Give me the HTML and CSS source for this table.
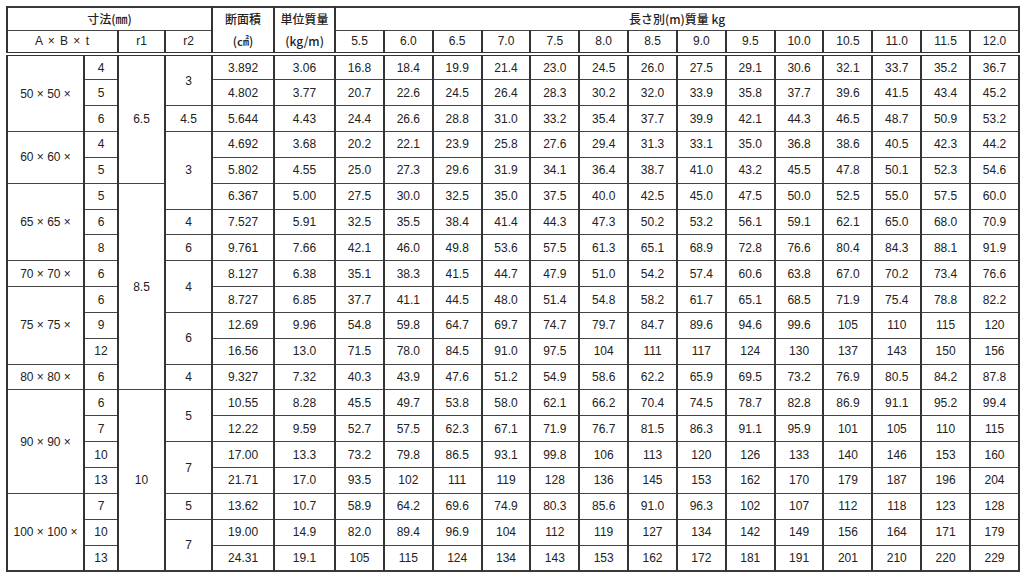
FILE: index.html
```html
<!DOCTYPE html>
<html lang="ja">
<head>
<meta charset="utf-8">
<title>等辺山形鋼 寸法・質量表</title>
<link rel="stylesheet" href="styles.css">
</head>
<body>
<div class="page">
<table class="tbl">
<colgroup>
<col class="c-size"><col class="c-t"><col class="c-r"><col class="c-r"><col class="c-area"><col class="c-mass">
<col><col><col><col><col><col><col><col><col><col><col><col><col><col>
</colgroup>
<thead>
<tr class="h1">
<th colspan="4" class="jp">寸法(㎜)</th>
<th rowspan="2" class="jp two">断面積<br>(㎠)</th>
<th rowspan="2" class="jp two">単位質量<br>(kg/m)</th>
<th colspan="14" class="jp">長さ別(m)質量 kg</th>
</tr>
<tr class="h2">
<th colspan="2" class="abt">A × B × t</th>
<th>r1</th><th>r2</th>
<th>5.5</th><th>6.0</th><th>6.5</th><th>7.0</th><th>7.5</th><th>8.0</th><th>8.5</th><th>9.0</th><th>9.5</th><th>10.0</th><th>10.5</th><th>11.0</th><th>11.5</th><th>12.0</th>
</tr>
</thead>
<tbody>
<tr><td rowspan="3">50 × 50 ×</td><td>4</td><td rowspan="5">6.5</td><td rowspan="2">3</td><td>3.892</td><td>3.06</td><td>16.8</td><td>18.4</td><td>19.9</td><td>21.4</td><td>23.0</td><td>24.5</td><td>26.0</td><td>27.5</td><td>29.1</td><td>30.6</td><td>32.1</td><td>33.7</td><td>35.2</td><td>36.7</td></tr>
<tr><td>5</td><td>4.802</td><td>3.77</td><td>20.7</td><td>22.6</td><td>24.5</td><td>26.4</td><td>28.3</td><td>30.2</td><td>32.0</td><td>33.9</td><td>35.8</td><td>37.7</td><td>39.6</td><td>41.5</td><td>43.4</td><td>45.2</td></tr>
<tr><td>6</td><td>4.5</td><td>5.644</td><td>4.43</td><td>24.4</td><td>26.6</td><td>28.8</td><td>31.0</td><td>33.2</td><td>35.4</td><td>37.7</td><td>39.9</td><td>42.1</td><td>44.3</td><td>46.5</td><td>48.7</td><td>50.9</td><td>53.2</td></tr>
<tr><td rowspan="2">60 × 60 ×</td><td>4</td><td rowspan="3">3</td><td>4.692</td><td>3.68</td><td>20.2</td><td>22.1</td><td>23.9</td><td>25.8</td><td>27.6</td><td>29.4</td><td>31.3</td><td>33.1</td><td>35.0</td><td>36.8</td><td>38.6</td><td>40.5</td><td>42.3</td><td>44.2</td></tr>
<tr><td>5</td><td>5.802</td><td>4.55</td><td>25.0</td><td>27.3</td><td>29.6</td><td>31.9</td><td>34.1</td><td>36.4</td><td>38.7</td><td>41.0</td><td>43.2</td><td>45.5</td><td>47.8</td><td>50.1</td><td>52.3</td><td>54.6</td></tr>
<tr><td rowspan="3">65 × 65 ×</td><td>5</td><td rowspan="8">8.5</td><td>6.367</td><td>5.00</td><td>27.5</td><td>30.0</td><td>32.5</td><td>35.0</td><td>37.5</td><td>40.0</td><td>42.5</td><td>45.0</td><td>47.5</td><td>50.0</td><td>52.5</td><td>55.0</td><td>57.5</td><td>60.0</td></tr>
<tr><td>6</td><td>4</td><td>7.527</td><td>5.91</td><td>32.5</td><td>35.5</td><td>38.4</td><td>41.4</td><td>44.3</td><td>47.3</td><td>50.2</td><td>53.2</td><td>56.1</td><td>59.1</td><td>62.1</td><td>65.0</td><td>68.0</td><td>70.9</td></tr>
<tr><td>8</td><td>6</td><td>9.761</td><td>7.66</td><td>42.1</td><td>46.0</td><td>49.8</td><td>53.6</td><td>57.5</td><td>61.3</td><td>65.1</td><td>68.9</td><td>72.8</td><td>76.6</td><td>80.4</td><td>84.3</td><td>88.1</td><td>91.9</td></tr>
<tr><td>70 × 70 ×</td><td>6</td><td rowspan="2">4</td><td>8.127</td><td>6.38</td><td>35.1</td><td>38.3</td><td>41.5</td><td>44.7</td><td>47.9</td><td>51.0</td><td>54.2</td><td>57.4</td><td>60.6</td><td>63.8</td><td>67.0</td><td>70.2</td><td>73.4</td><td>76.6</td></tr>
<tr><td rowspan="3">75 × 75 ×</td><td>6</td><td>8.727</td><td>6.85</td><td>37.7</td><td>41.1</td><td>44.5</td><td>48.0</td><td>51.4</td><td>54.8</td><td>58.2</td><td>61.7</td><td>65.1</td><td>68.5</td><td>71.9</td><td>75.4</td><td>78.8</td><td>82.2</td></tr>
<tr><td>9</td><td rowspan="2">6</td><td>12.69</td><td>9.96</td><td>54.8</td><td>59.8</td><td>64.7</td><td>69.7</td><td>74.7</td><td>79.7</td><td>84.7</td><td>89.6</td><td>94.6</td><td>99.6</td><td>105</td><td>110</td><td>115</td><td>120</td></tr>
<tr><td>12</td><td>16.56</td><td>13.0</td><td>71.5</td><td>78.0</td><td>84.5</td><td>91.0</td><td>97.5</td><td>104</td><td>111</td><td>117</td><td>124</td><td>130</td><td>137</td><td>143</td><td>150</td><td>156</td></tr>
<tr><td>80 × 80 ×</td><td>6</td><td>4</td><td>9.327</td><td>7.32</td><td>40.3</td><td>43.9</td><td>47.6</td><td>51.2</td><td>54.9</td><td>58.6</td><td>62.2</td><td>65.9</td><td>69.5</td><td>73.2</td><td>76.9</td><td>80.5</td><td>84.2</td><td>87.8</td></tr>
<tr><td rowspan="4">90 × 90 ×</td><td>6</td><td rowspan="7">10</td><td rowspan="2">5</td><td>10.55</td><td>8.28</td><td>45.5</td><td>49.7</td><td>53.8</td><td>58.0</td><td>62.1</td><td>66.2</td><td>70.4</td><td>74.5</td><td>78.7</td><td>82.8</td><td>86.9</td><td>91.1</td><td>95.2</td><td>99.4</td></tr>
<tr><td>7</td><td>12.22</td><td>9.59</td><td>52.7</td><td>57.5</td><td>62.3</td><td>67.1</td><td>71.9</td><td>76.7</td><td>81.5</td><td>86.3</td><td>91.1</td><td>95.9</td><td>101</td><td>105</td><td>110</td><td>115</td></tr>
<tr><td>10</td><td rowspan="2">7</td><td>17.00</td><td>13.3</td><td>73.2</td><td>79.8</td><td>86.5</td><td>93.1</td><td>99.8</td><td>106</td><td>113</td><td>120</td><td>126</td><td>133</td><td>140</td><td>146</td><td>153</td><td>160</td></tr>
<tr><td>13</td><td>21.71</td><td>17.0</td><td>93.5</td><td>102</td><td>111</td><td>119</td><td>128</td><td>136</td><td>145</td><td>153</td><td>162</td><td>170</td><td>179</td><td>187</td><td>196</td><td>204</td></tr>
<tr><td rowspan="3">100 × 100 ×</td><td>7</td><td>5</td><td>13.62</td><td>10.7</td><td>58.9</td><td>64.2</td><td>69.6</td><td>74.9</td><td>80.3</td><td>85.6</td><td>91.0</td><td>96.3</td><td>102</td><td>107</td><td>112</td><td>118</td><td>123</td><td>128</td></tr>
<tr><td>10</td><td rowspan="2">7</td><td>19.00</td><td>14.9</td><td>82.0</td><td>89.4</td><td>96.9</td><td>104</td><td>112</td><td>119</td><td>127</td><td>134</td><td>142</td><td>149</td><td>156</td><td>164</td><td>171</td><td>179</td></tr>
<tr><td>13</td><td>24.31</td><td>19.1</td><td>105</td><td>115</td><td>124</td><td>134</td><td>143</td><td>153</td><td>162</td><td>172</td><td>181</td><td>191</td><td>201</td><td>210</td><td>220</td><td>229</td></tr>
</tbody>
</table>
</div>
</body>
</html>
```

FILE: styles.css
```css
html, body {
  margin: 0;
  padding: 0;
  background: #ffffff;
}

.page {
  padding: 6px 0 0 6px;
}

.tbl {
  border-collapse: collapse;
  table-layout: fixed;
  width: 1014px;
  font-family: "Liberation Sans", "Noto Sans CJK JP", sans-serif;
  font-size: 12px;
  color: #222222;
  border: 2px solid #3a3a3a;
}

.c-size { width: 77px; }
.c-t { width: 34px; }
.c-r { width: 47px; }
.c-area { width: 62px; }
.c-mass { width: 61px; }

.tbl th,
.tbl td {
  padding: 0;
  text-align: center;
  vertical-align: middle;
  font-weight: normal;
  white-space: nowrap;
  border-top: 1px solid #444444;
  border-bottom: 1px solid #444444;
  border-left: 2px solid #333333;
  border-right: 2px solid #333333;
  line-height: 14px;
}

.tbl .jp {
  font-family: "Noto Sans CJK JP", "Liberation Sans", sans-serif;
  font-weight: 500;
}

.tbl .two {
  line-height: 22px;
  border-bottom: 4px double #333333;
}

.h1 { height: 23px; }
.h2 { height: 24px; }

.h2 th {
  border-bottom: 4px double #333333;
}

.abt {
  letter-spacing: 1px;
}

.tbl tbody tr {
  height: 25.85px;
}
```
